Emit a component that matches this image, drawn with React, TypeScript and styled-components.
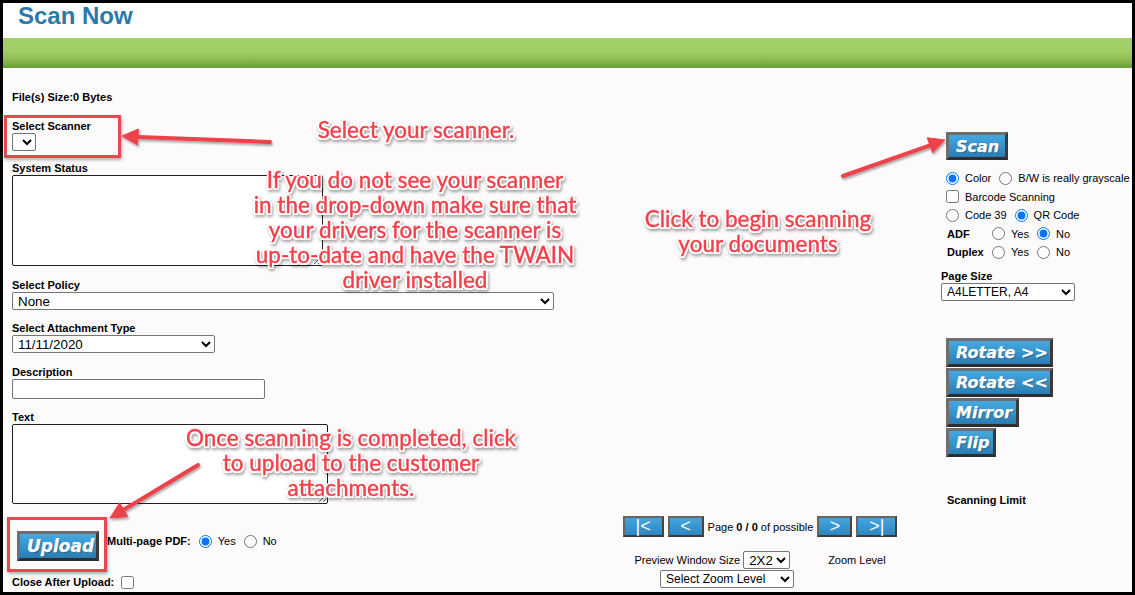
import React from 'react';
import styled, { createGlobalStyle } from 'styled-components';

const GlobalStyle = createGlobalStyle`
  html, body {
    margin: 0;
    padding: 0;
    background: #000;
  }
  body {
    font-family: 'Liberation Sans', Arial, sans-serif;
    color: #000;
  }
`;

const Page = styled.div`
  position: relative;
  width: 1135px;
  height: 595px;
  box-sizing: border-box;
  padding: 3px;
  background: #000;
  overflow: hidden;
`;

const Window = styled.div`
  display: flex;
  flex-direction: column;
  height: 100%;
  background: #fcfafb;
`;

const Header = styled.header`
  flex: none;
  height: 35px;
  padding-left: 15px;
  background: #fff;
`;

const Title = styled.h1`
  margin: 0;
  font-size: 24px;
  line-height: 26px;
  font-weight: bold;
  color: #2a79a9;
`;

const Ribbon = styled.div`
  flex: none;
  height: 30px;
  background: linear-gradient(#a1d169 0%, #9fcf65 45%, #8ebe53 70%, #6c9c37 100%);
`;

const Main = styled.main`
  flex: 1;
  display: flex;
  min-height: 0;
`;

const LeftColumn = styled.section`
  width: 560px;
  box-sizing: border-box;
  padding: 23px 0 0 9px;
  display: flex;
  flex-direction: column;
  align-items: flex-start;
`;

const CenterColumn = styled.section`
  width: 378px;
  box-sizing: border-box;
  padding: 0 0 4px 16px;
  display: flex;
  flex-direction: column;
  justify-content: flex-end;
`;

const RightColumn = styled.aside`
  flex: 1;
  padding-top: 64px;
  display: flex;
  flex-direction: column;
  align-items: flex-start;
`;

const Label = styled.div<{ $top?: number; $left?: number }>`
  margin-top: ${p => p.$top ?? 0}px;
  margin-left: ${p => p.$left ?? 0}px;
  font-size: 11px;
  line-height: 13px;
  font-weight: bold;
  white-space: nowrap;
`;

const Field = styled.div<{ $gap?: number }>`
  display: flex;
  flex-direction: column;
  align-items: flex-start;
  margin-top: ${p => p.$gap ?? 12.5}px;
`;

const Select = styled.select<{ $w: number; $h?: number; $size?: number }>`
  box-sizing: border-box;
  width: ${p => p.$w}px;
  height: ${p => p.$h ?? 18}px;
  margin: 0;
  padding: 0 0 0 1px;
  font-family: 'Liberation Sans', Arial, sans-serif;
  font-size: ${p => p.$size ?? 13.33}px;
  color: #000;
  background: #fff;
  border: 1px solid #767676;
  border-radius: 2px;
`;

const TextBox = styled.textarea<{ $w: number; $h: number }>`
  box-sizing: border-box;
  width: ${p => p.$w}px;
  height: ${p => p.$h}px;
  margin: 0;
  background: #fff;
  border: 1px solid #1f1f1f;
  border-radius: 2px;
`;

const Input = styled.input`
  box-sizing: border-box;
  width: 253px;
  height: 20px;
  margin: 0;
  background: #fff;
  border: 1px solid #767676;
  border-radius: 2px;
`;

const Button = styled.button<{ $w: number; $h: number; $size?: number }>`
  box-sizing: border-box;
  width: ${p => p.$w}px;
  height: ${p => p.$h}px;
  margin: 0 0 0 5px;
  padding: 0 0 0 7px;
  text-align: left;
  font-family: 'DejaVu Sans', Verdana, sans-serif;
  font-size: ${p => p.$size ?? 16}px;
  font-weight: bold;
  font-style: italic;
  color: #fff;
  -webkit-text-stroke: 0.25px #fff;
  text-shadow: 1px 1px 1px rgba(0, 0, 0, 0.35);
  background: linear-gradient(#47a8e0, #3592cb 55%, #2a7cb3);
  border: 3px solid;
  border-color: #6e6e6e #3a3a3a #2e2e2e #6e6e6e;
  border-radius: 0;
`;

const ButtonStack = styled.div`
  display: flex;
  flex-direction: column;
  align-items: flex-start;
  gap: 1px;
  margin-top: 37px;
`;

const UploadRow = styled.div`
  display: flex;
  align-items: center;
  gap: 8px;
  margin-top: 27px;
`;

const InlineGroup = styled.div<{ $lift?: number }>`
  display: flex;
  align-items: center;
  gap: 8px;
  margin-bottom: ${p => p.$lift ?? 0}px;
  font-size: 11px;
  white-space: nowrap;
`;

const Choice = styled.label`
  display: inline-flex;
  align-items: center;
  gap: 6px;
  font-size: 11px;
  white-space: nowrap;
`;

const Mark = styled.input`
  width: 13px;
  height: 13px;
  margin: 0;
`;

const CloseRow = styled.div`
  display: flex;
  align-items: center;
  gap: 7px;
  margin-top: 15px;
`;

const Options = styled.div`
  display: flex;
  flex-direction: column;
  margin-top: 9px;
`;

const OptionRow = styled.div`
  display: flex;
  align-items: center;
  gap: 8px;
  height: 18.5px;
  padding-left: 5px;
`;

const RowLabel = styled.span`
  box-sizing: border-box;
  width: 38px;
  padding-left: 1px;
  font-size: 11px;
  font-weight: bold;
`;

const Pager = styled.div`
  display: flex;
  justify-content: center;
  align-items: center;
  gap: 4px;
`;

const PagerButton = styled.button<{ $w: number }>`
  box-sizing: border-box;
  width: ${p => p.$w}px;
  height: 21px;
  margin: 0;
  padding: 0;
  font-family: 'Liberation Sans', Arial, sans-serif;
  font-size: 18px;
  line-height: 17px;
  color: #fff;
  background: linear-gradient(#44a5de, #2f86c0);
  border: 2px solid;
  border-color: #666 #444 #3a3a3a #666;
  border-radius: 0;
`;

const PageInfo = styled.span`
  font-size: 11px;
  white-space: nowrap;
`;

const PreviewRow = styled.div`
  display: flex;
  justify-content: center;
  align-items: center;
  margin-top: 14px;
  font-size: 11px;
  white-space: nowrap;
`;

const PreviewSelect = styled(Select)`
  margin-left: 3px;
`;

const ZoomLabel = styled.span`
  margin-left: 38px;
`;

const ZoomRow = styled.div`
  padding-left: 81px;
`;

/* annotation layer drawn over the form */

const Overlay = styled.div`
  position: absolute;
  inset: 0;
  pointer-events: none;
`;

const Highlight = styled.div<{ $x: number; $y: number; $w: number; $h: number }>`
  position: absolute;
  left: ${p => p.$x}px;
  top: ${p => p.$y}px;
  width: ${p => p.$w}px;
  height: ${p => p.$h}px;
  box-sizing: border-box;
  border: 3px solid #e9464e;
  box-shadow: 1px 2px 3px rgba(0, 0, 0, 0.3);
`;

const Callout = styled.div<{ $x: number; $y: number; $w: number }>`
  position: absolute;
  left: ${p => p.$x}px;
  top: ${p => p.$y}px;
  width: ${p => p.$w}px;
  text-align: center;
  font-family: Lato, 'Open Sans', sans-serif;
  font-size: 22.5px;
  line-height: 25px;
  color: #f2414b;
  -webkit-text-stroke: 0.4px #f2414b;
  text-shadow: -2px 0 0 #fff, 2px 0 0 #fff, 0 -2px 0 #fff, 0 2px 0 #fff,
    -1.5px -1.5px 0 #fff, 1.5px -1.5px 0 #fff, -1.5px 1.5px 0 #fff, 1.5px 1.5px 0 #fff;
  filter: drop-shadow(1px 2px 1.5px rgba(0, 0, 0, 0.35));
`;

const Arrows = styled.svg`
  position: absolute;
  left: 0;
  top: 0;
`;

function Arrow({ from, tip, base, wing }: { from: [number, number]; tip: [number, number]; base: [number, number]; wing: [number, number] }) {
  const points = [
    tip,
    [base[0] + wing[0], base[1] + wing[1]],
    [base[0] - wing[0], base[1] - wing[1]],
  ]
    .map(p => p.join(','))
    .join(' ');
  return (
    <g>
      <line x1={from[0]} y1={from[1]} x2={base[0]} y2={base[1]} strokeWidth={4} strokeLinecap="round" />
      <polygon points={points} />
    </g>
  );
}

export default function App() {
  return (
    <Page>
      <GlobalStyle />
      <Window>
        <Header>
          <Title>Scan Now</Title>
        </Header>
        <Ribbon />
        <Main>
          <LeftColumn>
            <Label>File(s) Size:0 Bytes</Label>

            <Field $gap={16}>
              <Label>Select Scanner</Label>
              <Select $w={24} $h={18}>
                <option value=""></option>
              </Select>
            </Field>

            <Field $gap={11}>
              <Label>System Status</Label>
              <TextBox $w={311} $h={91} readOnly />
            </Field>

            <Field>
              <Label>Select Policy</Label>
              <Select $w={542}>
                <option>None</option>
              </Select>
            </Field>

            <Field>
              <Label>Select Attachment Type</Label>
              <Select $w={203}>
                <option>11/11/2020</option>
              </Select>
            </Field>

            <Field>
              <Label>Description</Label>
              <Input type="text" />
            </Field>

            <Field>
              <Label>Text</Label>
              <TextBox $w={316} $h={80} />
            </Field>

            <UploadRow>
              <Button $w={82} $h={30} $size={17}>Upload</Button>
              <InlineGroup $lift={10}>
                <Label>Multi-page PDF:</Label>
                <Choice>
                  <Mark type="radio" name="multipage" defaultChecked />
                  Yes
                </Choice>
                <Choice>
                  <Mark type="radio" name="multipage" />
                  No
                </Choice>
              </InlineGroup>
            </UploadRow>

            <CloseRow>
              <Label>Close After Upload:</Label>
              <Mark type="checkbox" />
            </CloseRow>
          </LeftColumn>

          <CenterColumn>
            <Pager>
              <PagerButton $w={41}>|&lt;</PagerButton>
              <PagerButton $w={36}>&lt;</PagerButton>
              <PageInfo>
                Page <b>0 / 0</b> of possible
              </PageInfo>
              <PagerButton $w={35}>&gt;</PagerButton>
              <PagerButton $w={41}>&gt;|</PagerButton>
            </Pager>
            <PreviewRow>
              Preview Window Size
              <PreviewSelect $w={47} $h={18}>
                <option>2X2</option>
              </PreviewSelect>
              <ZoomLabel>Zoom Level</ZoomLabel>
            </PreviewRow>
            <ZoomRow>
              <Select $w={134} $size={12}>
                <option>Select Zoom Level</option>
              </Select>
            </ZoomRow>
          </CenterColumn>

          <RightColumn>
            <Button $w={62} $h={28}>Scan</Button>
            <Options>
              <OptionRow>
                <Choice>
                  <Mark type="radio" name="mode" defaultChecked />
                  Color
                </Choice>
                <Choice>
                  <Mark type="radio" name="mode" />
                  B/W is really grayscale
                </Choice>
              </OptionRow>
              <OptionRow>
                <Choice>
                  <Mark type="checkbox" />
                  Barcode Scanning
                </Choice>
              </OptionRow>
              <OptionRow>
                <Choice>
                  <Mark type="radio" name="barcode" />
                  Code 39
                </Choice>
                <Choice>
                  <Mark type="radio" name="barcode" defaultChecked />
                  QR Code
                </Choice>
              </OptionRow>
              <OptionRow>
                <RowLabel>ADF</RowLabel>
                <Choice>
                  <Mark type="radio" name="adf" />
                  Yes
                </Choice>
                <Choice>
                  <Mark type="radio" name="adf" defaultChecked />
                  No
                </Choice>
              </OptionRow>
              <OptionRow>
                <RowLabel>Duplex</RowLabel>
                <Choice>
                  <Mark type="radio" name="duplex" />
                  Yes
                </Choice>
                <Choice>
                  <Mark type="radio" name="duplex" />
                  No
                </Choice>
              </OptionRow>
            </Options>

            <Label $top={8}>Page Size</Label>
            <Select $w={134} $size={12}>
              <option>A4LETTER, A4</option>
            </Select>

            <ButtonStack>
              <Button $w={107} $h={29}>Rotate &gt;&gt;</Button>
              <Button $w={107} $h={29}>Rotate &lt;&lt;</Button>
              <Button $w={73} $h={29}>Mirror</Button>
              <Button $w={50} $h={29}>Flip</Button>
            </ButtonStack>

            <Label $top={37} $left={6}>Scanning Limit</Label>
          </RightColumn>
        </Main>
      </Window>

      <Overlay>
        <Highlight $x={4} $y={115} $w={117} $h={43} />
        <Highlight $x={7} $y={517} $w={100} $h={55} />

        <Arrows width={1135} height={595} viewBox="0 0 1135 595">
          <defs>
            <filter id="arrow-shadow" x="-10%" y="-10%" width="120%" height="130%">
              <feDropShadow dx="1" dy="2" stdDeviation="1.2" floodOpacity="0.35" />
            </filter>
          </defs>
          <g fill="#ee424b" stroke="#ee424b" filter="url(#arrow-shadow)">
            <Arrow from={[270, 142]} tip={[122, 136]} base={[138, 137]} wing={[0.4, -8]} />
            <Arrow from={[843, 176]} tip={[945, 140]} base={[930, 145.3]} wing={[2.7, 7.5]} />
            <Arrow from={[198, 465]} tip={[110, 518]} base={[123.7, 509.7]} wing={[4.1, 6.9]} />
          </g>
        </Arrows>

        <Callout $x={216} $y={117} $w={400}>Select your scanner.</Callout>
        <Callout $x={215} $y={167} $w={400}>
          If you do not see your scanner
          <br />
          in the drop-down make sure that
          <br />
          your drivers for the scanner is
          <br />
          up-to-date and have the TWAIN
          <br />
          driver installed
        </Callout>
        <Callout $x={558} $y={206} $w={400}>
          Click to begin scanning
          <br />
          your documents
        </Callout>
        <Callout $x={151} $y={425} $w={400}>
          Once scanning is completed, click
          <br />
          to upload to the customer
          <br />
          attachments.
        </Callout>
      </Overlay>
    </Page>
  );
}
